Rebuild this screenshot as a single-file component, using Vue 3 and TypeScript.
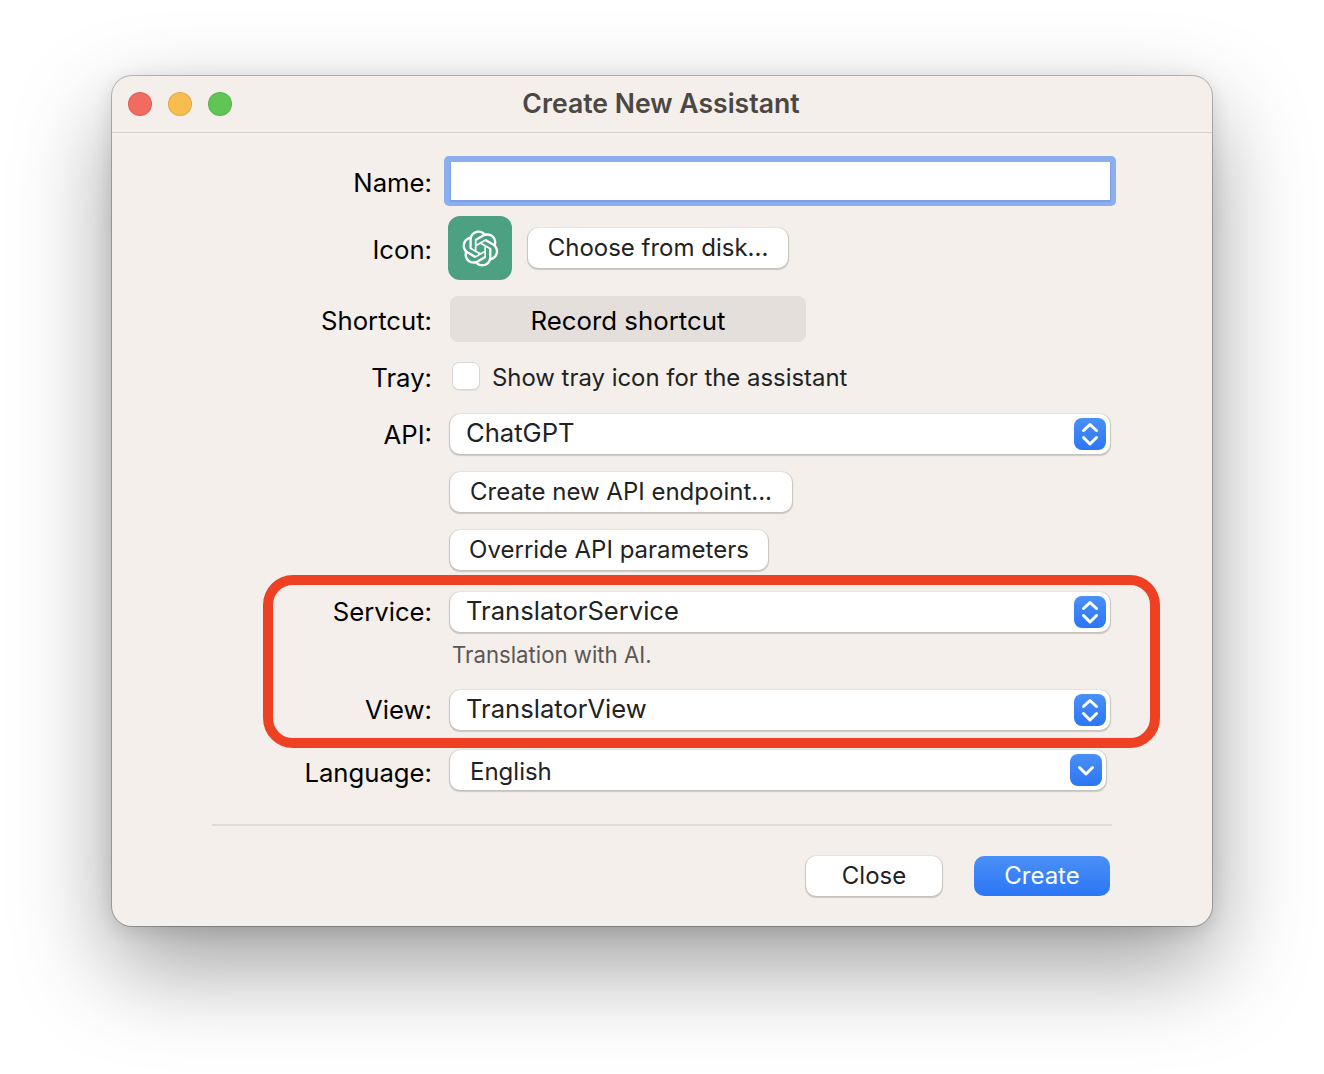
<script setup lang="ts">
interface SelectItem { label: string; value: string; }
const serviceItems: SelectItem[] = [
  { label: 'Service:', value: 'TranslatorService' },
];
const lights: string[] = ['red', 'yellow', 'green'];
</script>

<template>
  <div class="page">
    <div class="window">
      <header class="titlebar">
        <div class="lights">
          <span v-for="l in lights" :key="l" class="light" :class="l"></span>
        </div>
        <h1 class="title">Create New Assistant</h1>
      </header>

      <main class="form">
        <div class="row row-name">
          <label class="label">Name:</label>
          <div class="ring"><div class="input"></div></div>
        </div>

        <div class="row row-icon">
          <label class="label">Icon:</label>
          <div class="icon-box">
            <svg class="logo" viewBox="0 0 41 41" fill="currentColor">
              <path d="M37.5324 16.8707C37.9808 15.5241 38.1363 14.0974 37.9886 12.6859C37.8409 11.2744 37.3934 9.91076 36.676 8.68622C35.6126 6.83404 33.9882 5.3676 32.0373 4.4985C30.0864 3.62941 27.9098 3.40259 25.8215 3.85078C24.8796 2.7893 23.7219 1.94125 22.4257 1.36341C21.1295 0.785575 19.7249 0.491269 18.3058 0.500197C16.1708 0.495044 14.0893 1.16803 12.3614 2.42214C10.6335 3.67624 9.34853 5.44666 8.6917 7.47815C7.30085 7.76286 5.98686 8.3414 4.8377 9.17505C3.68854 10.0087 2.73073 11.0782 2.02839 12.312C0.956464 14.1591 0.498905 16.2988 0.721698 18.4228C0.944492 20.5467 1.83612 22.5449 3.268 24.1293C2.81966 25.4759 2.66413 26.9026 2.81182 28.3141C2.95951 29.7256 3.40701 31.0892 4.12437 32.3138C5.18791 34.1659 6.8123 35.6322 8.76321 36.5013C10.7141 37.3704 12.8907 37.5973 14.9789 37.1492C15.9208 38.2107 17.0786 39.0587 18.3747 39.6366C19.6709 40.2144 21.0755 40.5087 22.4946 40.4998C24.6307 40.5054 26.7133 39.8321 28.4418 38.5772C30.1704 37.3223 31.4556 35.5506 32.1119 33.5179C33.5027 33.2332 34.8167 32.6547 35.9659 31.821C37.115 30.9874 38.0728 29.9178 38.7752 28.684C39.8458 26.8371 40.3023 24.6979 40.0789 22.5748C39.8556 20.4517 38.9639 18.4544 37.5324 16.8707ZM22.4978 37.8849C20.7443 37.8874 19.0459 37.2733 17.6994 36.1501C17.7601 36.117 17.8666 36.0586 17.936 36.0161L25.9004 31.4156C26.1003 31.3019 26.2663 31.137 26.3813 30.9378C26.4964 30.7386 26.5563 30.5124 26.5549 30.2825V19.0542L29.9213 20.998C29.9389 21.0068 29.9541 21.0198 29.9656 21.0359C29.977 21.052 29.9842 21.0707 29.9867 21.0902V30.3889C29.9842 32.375 29.1946 34.2791 27.7909 35.6841C26.3872 37.0892 24.4838 37.8806 22.4978 37.8849ZM6.39227 31.0064C5.51397 29.4888 5.19742 27.7107 5.49804 25.9832C5.55718 26.0187 5.66048 26.0818 5.73461 26.1244L13.699 30.7248C13.8975 30.8408 14.1233 30.902 14.3532 30.902C14.583 30.902 14.8088 30.8408 15.0073 30.7248L24.731 25.1103V28.9979C24.7321 29.0177 24.7283 29.0376 24.7199 29.0556C24.7115 29.0736 24.6988 29.0893 24.6829 29.1012L16.6317 33.7497C14.9096 34.7416 12.8643 35.0097 10.9447 34.4954C9.02506 33.9811 7.38785 32.7263 6.39227 31.0064ZM4.29707 13.6194C5.17156 12.0998 6.55279 10.9364 8.19885 10.3327C8.19885 10.4013 8.19491 10.5228 8.19491 10.6071V19.808C8.19351 20.0378 8.25334 20.2638 8.36823 20.4629C8.48312 20.6619 8.64893 20.8267 8.84863 20.9404L18.5723 26.5542L15.206 28.4979C15.1894 28.5089 15.1703 28.5155 15.1505 28.5173C15.1307 28.5191 15.1107 28.516 15.0924 28.5082L7.04046 23.8557C5.32135 22.8601 4.06716 21.2235 3.55289 19.3046C3.03862 17.3858 3.30624 15.3413 4.29707 13.6194ZM31.955 20.0556L22.2312 14.4411L25.5976 12.4981C25.6142 12.4872 25.6333 12.4805 25.6531 12.4787C25.6729 12.4769 25.6928 12.4801 25.7111 12.4879L33.7631 17.1364C34.9967 17.849 36.0017 18.8982 36.6606 20.1613C37.3194 21.4244 37.6047 22.849 37.4832 24.2684C37.3617 25.6878 36.8382 27.0432 35.9743 28.1759C35.1103 29.3086 33.9415 30.1717 32.6047 30.6641C32.6047 30.5947 32.6047 30.4733 32.6047 30.3889V21.188C32.6066 20.9586 32.5474 20.7328 32.4332 20.5338C32.319 20.3348 32.154 20.1698 31.955 20.0556ZM35.3055 15.0128C35.2464 14.9765 35.1431 14.9142 35.069 14.8717L27.1045 10.2712C26.906 10.1554 26.6803 10.0943 26.4504 10.0943C26.2206 10.0943 25.9948 10.1554 25.7963 10.2712L16.0726 15.8858V11.9982C16.0715 11.9783 16.0753 11.9585 16.0837 11.9405C16.0921 11.9225 16.1048 11.9068 16.1207 11.8949L24.1719 7.25025C25.4053 6.53903 26.8158 6.19376 28.2383 6.25482C29.6608 6.31589 31.0364 6.78077 32.2044 7.59508C33.3723 8.40939 34.2842 9.53945 34.8334 10.8531C35.3826 12.1667 35.5464 13.6095 35.3055 15.0128ZM14.2424 21.9419L10.8752 19.9981C10.8576 19.9893 10.8423 19.9763 10.8309 19.9602C10.8195 19.9441 10.8122 19.9254 10.8098 19.9058V10.6071C10.8107 9.18295 11.2173 7.78848 11.9819 6.58696C12.7466 5.38544 13.8377 4.42659 15.1275 3.82264C16.4173 3.21869 17.8524 2.99464 19.2649 3.1767C20.6775 3.35876 22.0089 3.93941 23.1034 4.85067C23.0427 4.88379 22.937 4.94215 22.8668 4.98473L14.9024 9.58517C14.7025 9.69878 14.5366 9.86356 14.4215 10.0626C14.3065 10.2616 14.2466 10.4877 14.2479 10.7175L14.2424 21.9419ZM16.071 17.9991L20.4018 15.4978L24.7325 17.9975V22.9985L20.4018 25.4983L16.071 22.9985V17.9991Z"/>
            </svg>
          </div>
          <button class="btn btn-choose">Choose from disk...</button>
        </div>

        <div class="row row-shortcut">
          <label class="label">Shortcut:</label>
          <button class="btn-record">Record shortcut</button>
        </div>

        <div class="row row-tray">
          <label class="label">Tray:</label>
          <span class="checkbox"></span>
          <span class="check-text">Show tray icon for the assistant</span>
        </div>

        <div class="row row-api">
          <label class="label label-api">API:</label>
          <div class="select">
            <span class="select-text">ChatGPT</span>
            <span class="stepper">
              <svg viewBox="0 0 32 32" class="chev"><path d="M9.5 12.5 16 6.5l6.5 6M9.5 19.5l6.5 6.5 6.5-6.5"/></svg>
            </span>
          </div>
        </div>

        <div class="row row-new">
          <span class="label"></span>
          <button class="btn btn-new">Create new API endpoint...</button>
        </div>

        <div class="row row-override">
          <span class="label"></span>
          <button class="btn btn-override">Override API parameters</button>
        </div>

        <section class="group">
          <div v-for="item in serviceItems" :key="item.value" class="row">
            <label class="label label-flat">{{ item.label }}</label>
            <div class="select">
              <span class="select-text">{{ item.value }}</span>
              <span class="stepper">
                <svg viewBox="0 0 32 32" class="chev"><path d="M9.5 12.5 16 6.5l6.5 6M9.5 19.5l6.5 6.5 6.5-6.5"/></svg>
              </span>
            </div>
          </div>
          <div class="row row-hint">
            <span class="label"></span>
            <span class="hint">Translation with AI.</span>
          </div>
          <div class="row row-view">
            <label class="label label-flat">View:</label>
            <div class="select">
              <span class="select-text">TranslatorView</span>
              <span class="stepper">
                <svg viewBox="0 0 32 32" class="chev"><path d="M9.5 12.5 16 6.5l6.5 6M9.5 19.5l6.5 6.5 6.5-6.5"/></svg>
              </span>
            </div>
          </div>
        </section>

        <div class="row row-lang">
          <label class="label label-lang">Language:</label>
          <div class="select select-lang">
            <span class="lang-text">English</span>
            <span class="stepper">
              <svg viewBox="0 0 32 32" class="chev"><path d="M9.5 13.5 16 20l6.5-6.5"/></svg>
            </span>
          </div>
        </div>

        <div class="divider"></div>

        <footer class="actions">
          <button class="btn btn-action">Close</button>
          <button class="btn btn-action btn-primary">Create</button>
        </footer>
      </main>
    </div>
  </div>
</template>

<style>
html, body { margin: 0; background: #fff; }
</style>

<style scoped>
.page {
  width: 1324px;
  height: 1074px;
  overflow: hidden;
  padding: 76px 112px 0;
  box-sizing: border-box;
  background: #fff;
  font-family: Inter, "Liberation Sans", sans-serif;
}
.window {
  width: 1100px;
  height: 850px;
  box-sizing: border-box;
  background: #f4efeb;
  border-radius: 20px;
  box-shadow: 0 0 0 1px rgba(0,0,0,.24), 0 4px 20px rgba(0,0,0,.12), 0 40px 96px rgba(0,0,0,.38);
}
.titlebar {
  height: 56px;
  border-bottom: 1px solid #d5d0cc;
  display: flex;
  align-items: center;
  justify-content: center;
  position: relative;
}
.lights {
  position: absolute;
  left: 16px;
  top: 16px;
  display: flex;
  gap: 16px;
}
.light {
  width: 24px;
  height: 24px;
  border-radius: 50%;
  box-sizing: border-box;
  border: 1px solid rgba(0,0,0,.1);
}
.red { background: #f16b5f; }
.yellow { background: #f7bd4f; }
.green { background: #61c555; }
.title {
  margin: 0 2px 3px 0;
  font-size: 26.6px;
  font-weight: 600;
  color: #4c4743;
}
.form { display: flex; flex-direction: column; }
.row { display: flex; align-items: center; }
.label {
  flex: 0 0 320px;
  margin-right: 18px;
  text-align: right;
  font-size: 25.7px;
  color: #000;
  position: relative;
  top: 1px;
}
.label-flat { top: -1px; }
.label-api { top: 0; }
.label-lang { top: 2px; }
.row-name { margin-top: 23px; height: 50px; }
.row-name .label { margin-right: 12px; }
.ring {
  width: 672px;
  height: 50px;
  box-sizing: border-box;
  padding: 6px 6px 6px 7px;
  border-radius: 5px;
  background: #8aaeee;
}
.input {
  height: 100%;
  background: #fff;
  box-shadow: 0 1px 0 1px #7c9fe6;
}
.row-icon { margin-top: 10px; height: 64px; }
.row-icon .label { margin-right: 16px; }
.icon-box {
  width: 64px;
  height: 64px;
  border-radius: 12px;
  background: #4ca183;
  color: #fff;
  display: flex;
  align-items: center;
  justify-content: center;
}
.logo { width: 37px; height: 37px; }
.btn {
  font-family: inherit;
  font-size: 24px;
  color: #222;
  height: 40px;
  padding: 0 0 2px;
  border: 0;
  border-radius: 10px;
  background: #fff;
  box-shadow: 0 0 0 1px rgba(0,0,0,.03), 0 1px 1px 1px rgba(0,0,0,.16);
}
.btn-choose { width: 260px; margin-left: 16px; }
.row-shortcut { margin-top: 16px; height: 46px; }
.btn-record {
  width: 356px;
  height: 46px;
  padding: 2px 0 0;
  border: 0;
  border-radius: 8px;
  background: #e4dfdb;
  color: #000;
  font-family: inherit;
  font-size: 25.8px;
}
.row-tray { margin-top: 20px; height: 28px; }
.row-tray .label { margin-right: 20px; }
.checkbox {
  width: 28px;
  height: 28px;
  box-sizing: border-box;
  background: #fff;
  border-radius: 7px;
  box-shadow: inset 0 0 0 1px rgba(0,0,0,.16), 0 1px 0 rgba(0,0,0,.06);
}
.check-text {
  margin: 2px 0 0 12px;
  font-size: 23.9px;
  color: #222;
}
.row-api { margin-top: 24px; height: 40px; }
.select {
  width: 660px;
  height: 40px;
  box-sizing: border-box;
  padding: 0 4px 0 16px;
  border-radius: 10px;
  background: #fff;
  box-shadow: 0 0 0 1px rgba(0,0,0,.03), 0 1px 1px 1px rgba(0,0,0,.16);
  display: flex;
  align-items: center;
  justify-content: space-between;
}
.select-lang { width: 656px; padding-left: 20px; }
.select-text { margin-bottom: 4px; font-size: 25.6px; color: #222; }
.lang-text { margin-top: 2px; font-size: 24px; color: #222; }
.stepper {
  width: 32px;
  height: 32px;
  border-radius: 8px;
  background: linear-gradient(#4a90f7, #2b76f6);
  display: flex;
}
.chev {
  width: 32px;
  height: 32px;
  fill: none;
  stroke: #fff;
  stroke-width: 3;
  stroke-linecap: round;
  stroke-linejoin: round;
}
.row-new { margin-top: 18px; height: 40px; }
.btn-new { width: 342px; }
.row-override { margin-top: 18px; height: 40px; }
.btn-override { width: 318px; }
.group {
  margin-top: 22px;
  position: relative;
}
.group > .row { height: 40px; }
.group::after {
  content: "";
  position: absolute;
  left: 151px;
  right: 52px;
  top: -17px;
  bottom: -18px;
  border: 10px solid #ee4023;
  border-radius: 30px;
  pointer-events: none;
}
.group > .row-hint { height: 24px; margin-top: 10px; }
.hint { margin-left: 2px; font-size: 22.2px; color: #5a5754; }
.group > .row-view { margin-top: 24px; }
.row-lang { margin-top: 20px; height: 40px; }
.divider {
  margin: 34px 100px 0;
  height: 2px;
  background: #e0dbd7;
}
.actions {
  margin-top: 30px;
  padding-right: 102px;
  display: flex;
  justify-content: flex-end;
  gap: 32px;
}
.btn-action { width: 136px; }
.btn-primary {
  color: #fff;
  background: linear-gradient(#4a90f7, #2b76f6);
  box-shadow: none;
}
</style>
